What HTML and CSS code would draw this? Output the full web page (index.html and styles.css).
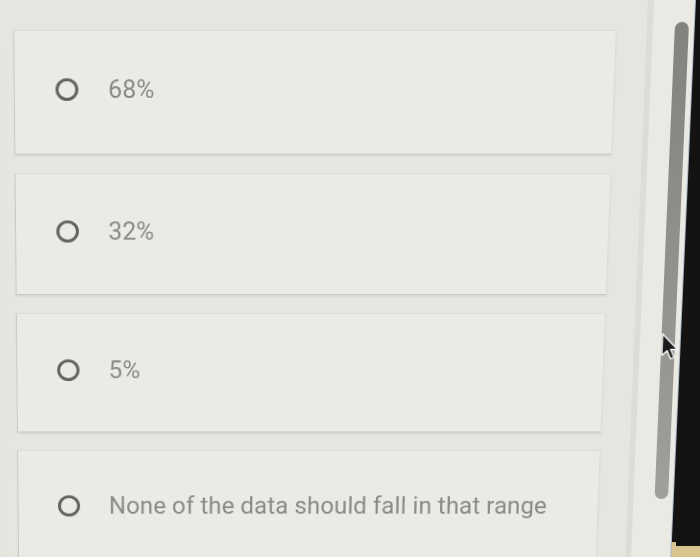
FILE: index.html
```html
<!DOCTYPE html>
<html lang="en">
<head>
<meta charset="utf-8">
<title>Quiz options</title>
<link rel="stylesheet" href="styles.css">
</head>
<body>
<div class="screen">
  <main class="options">
    <div class="option"><div class="row"><span class="radio"></span><span class="label">68%</span></div></div>
    <div class="option"><div class="row"><span class="radio"></span><span class="label">32%</span></div></div>
    <div class="option"><div class="row"><span class="radio"></span><span class="label">5%</span></div></div>
    <div class="option"><div class="row"><span class="radio"></span><span class="label">None of the data should fall in that range</span></div></div>
  </main>
  <div class="track">
    <div class="thumb"></div>
    <svg class="cursor" width="18" height="28" viewBox="0 0 12 19" aria-hidden="true">
      <path d="M0.6 0.6 L0.6 16.2 L4.2 12.8 L6.8 18.6 L9.2 17.6 L6.7 11.9 L11.4 11.9 Z" fill="#1a1a1a" stroke="#f4f4f4" stroke-width="1" stroke-linejoin="round"/>
    </svg>
  </div>
  <div class="bezel"><div class="tab"></div></div>
</div>
</body>
</html>
```
FILE: styles.css
```css
html, body {
  margin: 0;
  height: 100%;
  overflow: hidden;
}
body {
  background:
    linear-gradient(#d8c48f, #d8c48f) right bottom / 30px 11px no-repeat,
    linear-gradient(90deg, #e5e4df 0 50%, #141311 50%);
  font-family: Roboto, "Liberation Sans", sans-serif;
}
.screen {
  display: flex;
  width: 700px;
  height: 584px;
  overflow: hidden;
  background: #e6e5df;
  transform-origin: 130px 0;
  transform: perspective(1000px) rotateX(-4.5deg);
}
.options {
  flex: 0 0 648px;
  display: flex;
  flex-direction: column;
  gap: 19px;
  padding: 30px 0 0 13px;
  box-sizing: border-box;
}
.option {
  flex: none;
  width: 605px;
  height: 127px;
  box-sizing: border-box;
  padding: 47px 0 0 41px;
  background: #ebeae6;
  border: 1px solid #dddcd6;
  border-left-color: #cac9c3;
  border-bottom-color: #c8c7c1;
  box-shadow: 0 2px 2px rgba(0, 0, 0, 0.06);
}
.row {
  display: flex;
  align-items: center;
  gap: 30px;
  height: 24px;
}
.radio {
  flex: none;
  width: 23px;
  height: 23px;
  box-sizing: border-box;
  border: 3px solid #64635f;
  border-radius: 50%;
}
.label {
  font-size: 25px;
  letter-spacing: 0.1px;
  color: #8b8a86;
  white-space: nowrap;
}
.track {
  flex: 0 0 47px;
  position: relative;
  box-sizing: border-box;
  padding: 22px 4px 0 28px;
  background: linear-gradient(90deg, #dedcd6 0 6px, #eae9e4 6px);
}
.thumb {
  width: 14px;
  height: 499px;
  border-radius: 7px;
  background: linear-gradient(#84827d, #a09f9b);
}
.cursor {
  position: absolute;
  left: 28px;
  top: 343px;
}
.bezel {
  flex: 1;
  display: flex;
  flex-direction: column;
  justify-content: flex-end;
  background: #141311;
  border-left: 1px solid #a9b6c3;
}
.tab {
  height: 16px;
  background: #d8c48f;
}
```
